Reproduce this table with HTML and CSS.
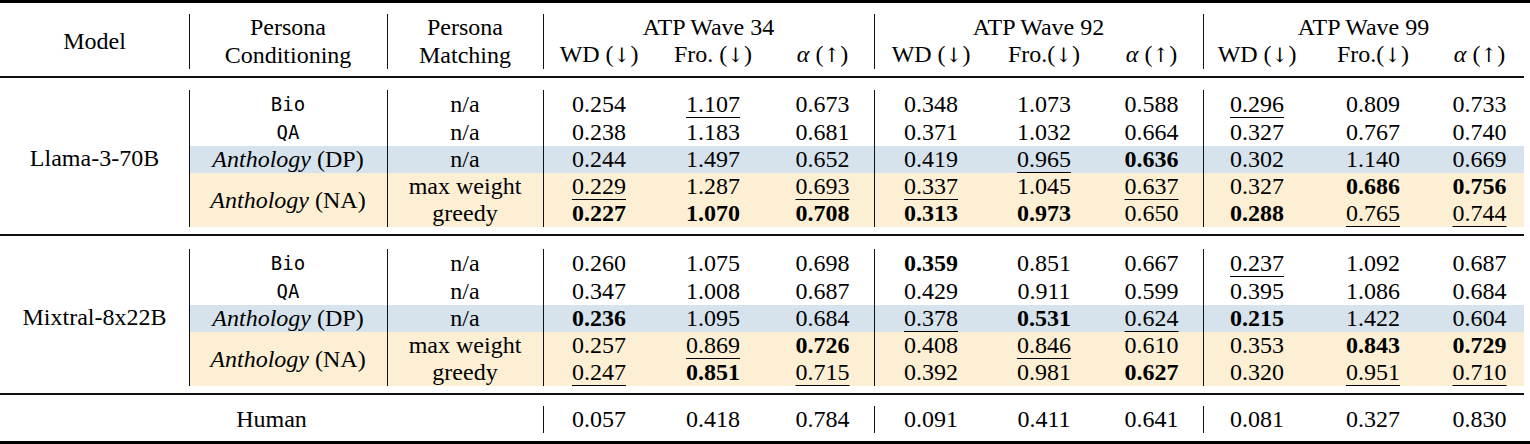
FILE: index.html
```html
<!DOCTYPE html>
<html lang="en">
<head>
<meta charset="utf-8">
<title>Results table</title>
<link rel="stylesheet" href="styles.css">
</head>
<body>
<div class="page">
  <div class="toprule"></div>
  <table class="results">
    <colgroup>
      <col class="col-model"><col class="col-cond"><col class="col-match">
      <col class="col-wd34"><col class="col-fro34"><col class="col-a34">
      <col class="col-wd92"><col class="col-fro92"><col class="col-a92">
      <col class="col-wd99"><col class="col-fro99"><col class="col-a99">
    </colgroup>
    <tbody>
      <tr class="gap g11"><td colspan="12"></td></tr>
      <tr class="head h1">
        <td rowspan="2">Model</td>
        <td rowspan="2" class="vl two">Persona<br>Conditioning</td>
        <td rowspan="2" class="vl two">Persona<br>Matching</td>
        <td colspan="3" class="vl">ATP Wave 34</td>
        <td colspan="3" class="vl">ATP Wave 92</td>
        <td colspan="3" class="vl">ATP Wave 99</td>
      </tr>
      <tr class="head h2">
        <td class="vl">WD (<span class="ar">↓</span>)</td><td>Fro. (<span class="ar">↓</span>)</td><td><i>α</i> (<span class="ar">↑</span>)</td>
        <td class="vl">WD (<span class="ar">↓</span>)</td><td>Fro.(<span class="ar">↓</span>)</td><td><i>α</i> (<span class="ar">↑</span>)</td>
        <td class="vl">WD (<span class="ar">↓</span>)</td><td>Fro.(<span class="ar">↓</span>)</td><td><i>α</i> (<span class="ar">↑</span>)</td>
      </tr>
      <tr class="gap g7"><td colspan="12"></td></tr>
      <tr class="rule"><td colspan="12"></td></tr>
      <tr class="gap g12"><td colspan="12"></td></tr>

      <tr class="row">
        <td rowspan="5" class="model">Llama-3-70B</td>
        <td class="vl"><span class="tt">Bio</span></td><td class="vl">n/a</td>
        <td class="vl">0.254</td><td><u>1.107</u></td><td>0.673</td>
        <td class="vl">0.348</td><td>1.073</td><td>0.588</td>
        <td class="vl"><u>0.296</u></td><td>0.809</td><td>0.733</td>
      </tr>
      <tr class="row">
        <td class="vl"><span class="tt">QA</span></td><td class="vl">n/a</td>
        <td class="vl">0.238</td><td>1.183</td><td>0.681</td>
        <td class="vl">0.371</td><td>1.032</td><td>0.664</td>
        <td class="vl">0.327</td><td>0.767</td><td>0.740</td>
      </tr>
      <tr class="row dp">
        <td class="vl"><i>Anthology</i> (DP)</td><td class="vl">n/a</td>
        <td class="vl">0.244</td><td>1.497</td><td>0.652</td>
        <td class="vl">0.419</td><td><u>0.965</u></td><td><b>0.636</b></td>
        <td class="vl">0.302</td><td>1.140</td><td>0.669</td>
      </tr>
      <tr class="row na">
        <td rowspan="2" class="vl"><i>Anthology</i> (NA)</td><td class="vl">max weight</td>
        <td class="vl"><u>0.229</u></td><td>1.287</td><td><u>0.693</u></td>
        <td class="vl"><u>0.337</u></td><td>1.045</td><td><u>0.637</u></td>
        <td class="vl">0.327</td><td><b>0.686</b></td><td><b>0.756</b></td>
      </tr>
      <tr class="row na">
        <td class="vl">greedy</td>
        <td class="vl"><b>0.227</b></td><td><b>1.070</b></td><td><b>0.708</b></td>
        <td class="vl"><b>0.313</b></td><td><b>0.973</b></td><td>0.650</td>
        <td class="vl"><b>0.288</b></td><td><u>0.765</u></td><td><u>0.744</u></td>
      </tr>

      <tr class="gap g7"><td colspan="12"></td></tr>
      <tr class="rule"><td colspan="12"></td></tr>
      <tr class="gap g13"><td colspan="12"></td></tr>

      <tr class="row">
        <td rowspan="5" class="model">Mixtral-8x22B</td>
        <td class="vl"><span class="tt">Bio</span></td><td class="vl">n/a</td>
        <td class="vl">0.260</td><td>1.075</td><td>0.698</td>
        <td class="vl"><b>0.359</b></td><td>0.851</td><td>0.667</td>
        <td class="vl"><u>0.237</u></td><td>1.092</td><td>0.687</td>
      </tr>
      <tr class="row">
        <td class="vl"><span class="tt">QA</span></td><td class="vl">n/a</td>
        <td class="vl">0.347</td><td>1.008</td><td>0.687</td>
        <td class="vl">0.429</td><td>0.911</td><td>0.599</td>
        <td class="vl">0.395</td><td>1.086</td><td>0.684</td>
      </tr>
      <tr class="row dp">
        <td class="vl"><i>Anthology</i> (DP)</td><td class="vl">n/a</td>
        <td class="vl"><b>0.236</b></td><td>1.095</td><td>0.684</td>
        <td class="vl"><u>0.378</u></td><td><b>0.531</b></td><td><u>0.624</u></td>
        <td class="vl"><b>0.215</b></td><td>1.422</td><td>0.604</td>
      </tr>
      <tr class="row na">
        <td rowspan="2" class="vl"><i>Anthology</i> (NA)</td><td class="vl">max weight</td>
        <td class="vl">0.257</td><td><u>0.869</u></td><td><b>0.726</b></td>
        <td class="vl">0.408</td><td><u>0.846</u></td><td>0.610</td>
        <td class="vl">0.353</td><td><b>0.843</b></td><td><b>0.729</b></td>
      </tr>
      <tr class="row na">
        <td class="vl">greedy</td>
        <td class="vl"><u>0.247</u></td><td><b>0.851</b></td><td><u>0.715</u></td>
        <td class="vl">0.392</td><td>0.981</td><td><b>0.627</b></td>
        <td class="vl">0.320</td><td><u>0.951</u></td><td><u>0.710</u></td>
      </tr>

      <tr class="gap g7"><td colspan="12"></td></tr>
      <tr class="rule"><td colspan="12"></td></tr>
      <tr class="gap g11"><td colspan="12"></td></tr>

      <tr class="row">
        <td colspan="3">Human</td>
        <td class="vl">0.057</td><td>0.418</td><td>0.784</td>
        <td class="vl">0.091</td><td>0.411</td><td>0.641</td>
        <td class="vl">0.081</td><td>0.327</td><td>0.830</td>
      </tr>
      <tr class="gap g8"><td colspan="12"></td></tr>
    </tbody>
  </table>
  <div class="bottomrule"></div>
</div>
</body>
</html>
```
FILE: styles.css
```css
html, body {
  margin: 0;
  padding: 0;
  background: #ffffff;
}

body {
  width: 1530px;
  height: 444px;
  overflow: hidden;
  font-family: "Liberation Serif", serif;
  font-size: 24px;
  color: #000;
}

.page {
  display: flex;
  flex-direction: column;
  width: 1530px;
}

.toprule {
  height: 3px;
  background: #000;
}

.bottomrule {
  height: 4px;
  background: #000;
}

.results {
  width: 1524px;
  table-layout: fixed;
  border-collapse: collapse;
  border-spacing: 0;
  font-family: "Liberation Serif", serif;
  font-size: 24px;
}

.col-model { width: 189px; }
.col-cond { width: 198px; }
.col-match { width: 156px; }
.col-wd34 { width: 112px; }
.col-fro34 { width: 116px; }
.col-a34 { width: 103px; }
.col-wd92 { width: 114px; }
.col-fro92 { width: 112px; }
.col-a92 { width: 103px; }
.col-wd99 { width: 108px; }
.col-fro99 { width: 124px; }
.col-a99 { width: 89px; }

.results td {
  padding: 0;
  text-align: center;
  vertical-align: middle;
  white-space: nowrap;
  line-height: 27px;
  font-family: "Liberation Serif", serif;
}

.gap td {
  line-height: 0;
  font-size: 0;
}
.g7 td { height: 7px; }
.g8 td { height: 8px; }
.g11 td { height: 11px; }
.g12 td { height: 12px; }
.g13 td { height: 13px; }

.rule td {
  height: 2px;
  line-height: 0;
  font-size: 0;
  background: #111;
}

.h1 td { height: 27px; }
.h2 td { height: 28px; }
.head td.two { line-height: 27.5px; }

.row td { height: 27px; }

.vl {
  box-shadow: inset 1px 0 0 #111;
}

.dp td {
  background: #d6e3ec;
}

.na td {
  background: #fdefd3;
}

.results td.model {
  background: #fff;
}

.results .tt {
  font-family: "DejaVu Sans Mono", "Liberation Mono", monospace;
  font-size: 19px;
}

.results .ar {
  font-family: "DejaVu Serif", "Liberation Serif", serif;
  font-size: 20px;
}

u {
  text-decoration: underline;
  text-decoration-thickness: 1px;
  text-underline-offset: 5px;
}

b {
  font-weight: bold;
}
```
